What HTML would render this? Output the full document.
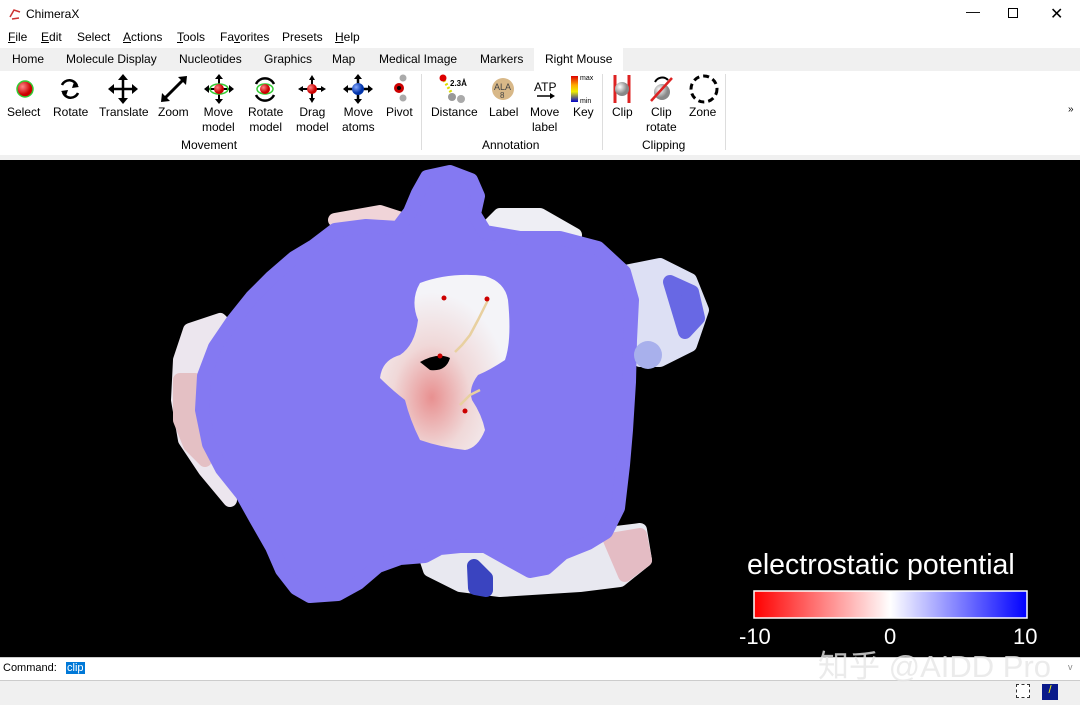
<!DOCTYPE html>
<html><head><meta charset="utf-8"><style>
*{margin:0;padding:0;box-sizing:border-box}
body{width:1080px;height:705px;overflow:hidden;background:#fff;font-family:"Segoe UI","Liberation Sans","DejaVu Sans",sans-serif;font-size:12px;color:#000;position:relative}
.abs{position:absolute}
.menu span{position:absolute;top:30px;font-size:12px}
.tabs{top:48px;left:0;width:1080px;height:23px;background:#f0f0f0}
.tabs span{position:absolute;top:4px;font-size:12px}
.tb{position:absolute;text-align:center;font-size:12px;line-height:15px;top:105px}
.grp{position:absolute;top:138px;font-size:12px}
</style></head><body>
<svg class="abs" style="left:8px;top:7px" width="14" height="14"><path d="M2 10 L6 3 L12 5 M4 12 L11 11" stroke="#c33" stroke-width="1.5" fill="none"/></svg>
<div class="abs" style="left:26px;top:7px;font-size:12px">ChimeraX</div>
<div class="abs" style="left:966px;top:3px;font-size:14px">&#8212;</div>
<div class="abs" style="left:1008px;top:8px;width:10px;height:10px;border:1px solid #000"></div>
<div class="abs" style="left:1050px;top:4px;font-size:16px">&#x2715;</div>
<div class="menu">
<span style="left:8px"><u>F</u>ile</span><span style="left:41px"><u>E</u>dit</span><span style="left:77px">Select</span><span style="left:123px"><u>A</u>ctions</span><span style="left:177px"><u>T</u>ools</span><span style="left:220px">Fa<u>v</u>orites</span><span style="left:282px">Presets</span><span style="left:335px"><u>H</u>elp</span>
</div>
<div class="abs tabs">
<span style="left:12px">Home</span><span style="left:66px">Molecule Display</span><span style="left:179px">Nucleotides</span><span style="left:264px">Graphics</span><span style="left:332px">Map</span><span style="left:379px">Medical Image</span><span style="left:480px">Markers</span>
<div class="abs" style="left:534px;top:0;width:89px;height:23px;background:#fff"></div>
<span style="left:545px">Right Mouse</span>
</div>
<div class="abs" style="left:0;top:71px;width:1080px;height:84px;background:#fff"></div>
<div class="abs" style="left:0;top:155px;width:1080px;height:5px;background:#f0f0f0"></div>
<div class="abs" style="left:421px;top:74px;width:1px;height:76px;background:#ddd"></div>
<div class="abs" style="left:602px;top:74px;width:1px;height:76px;background:#ddd"></div>
<div class="abs" style="left:725px;top:74px;width:1px;height:76px;background:#ddd"></div>
<div class="abs" style="left:1068px;top:104px;font-size:10px">»</div>
<svg class="abs" style="left:0;top:72px" width="730" height="34">
<defs><radialGradient id="rb" cx=".35" cy=".35"><stop offset="0" stop-color="#f88"/><stop offset="1" stop-color="#c00"/></radialGradient>
<radialGradient id="bb" cx=".35" cy=".35"><stop offset="0" stop-color="#8af"/><stop offset="1" stop-color="#03a"/></radialGradient>
<radialGradient id="gb" cx=".35" cy=".35"><stop offset="0" stop-color="#fff"/><stop offset="1" stop-color="#888"/></radialGradient>
<linearGradient id="key" x1="0" y1="0" x2="0" y2="1"><stop offset="0" stop-color="#d00"/><stop offset=".35" stop-color="#fa0"/><stop offset=".6" stop-color="#ee0"/><stop offset="1" stop-color="#00c"/></linearGradient></defs>
<circle cx="25" cy="17" r="8" fill="url(#rb)" stroke="#3c3" stroke-width="1.5"/>
<path d="M62 13 A8 8 0 0 1 77 14 M78 21 A8 8 0 0 1 63 20" stroke="#000" stroke-width="2.5" fill="none"/><path d="M74 10 L79 15 L72 16Z M66 24 L61 19 L68 18Z" fill="#000"/>
<path d="M123 4 V30 M110 17 H136" stroke="#000" stroke-width="2.5"/><path d="M123 2 L118 8 H128Z M123 32 L118 26 H128Z M108 17 L114 12 V22Z M138 17 L132 12 V22Z" fill="#000"/>
<path d="M163 28 L185 6" stroke="#000" stroke-width="3"/><path d="M161 30 L162 21 L170 29Z M187 4 L178 5 L186 13Z" fill="#000"/>
<g transform="translate(219,17)"><path d="M0 -13 V13 M-13 0 H13" stroke="#000" stroke-width="2"/><path d="M0 -15 L-4 -10 H4Z M0 15 L-4 10 H4Z M-15 0 L-10 -4 V4Z M15 0 L10 -4 V4Z" fill="#000"/><ellipse rx="9" ry="5" fill="none" stroke="#3c3" stroke-width="1.5"/><circle r="5" fill="url(#rb)"/></g>
<g transform="translate(265,17)"><path d="M-9 -5 A10 10 0 0 1 9 -5 M9 6 A10 10 0 0 1 -9 6" stroke="#000" stroke-width="2.5" fill="none"/><ellipse rx="8" ry="5" fill="none" stroke="#3c3" stroke-width="1.5"/><circle r="5" fill="url(#rb)"/></g>
<g transform="translate(312,17)"><path d="M0 -12 V12 M-12 0 H12" stroke="#000" stroke-width="2"/><path d="M0 -14 L-3 -9 H3Z M0 14 L-3 9 H3Z M-14 0 L-9 -3 V3Z M14 0 L9 -3 V3Z" fill="#000"/><circle r="5" fill="url(#rb)"/></g>
<g transform="translate(358,17)"><path d="M0 -13 V13 M-13 0 H13" stroke="#000" stroke-width="2.5"/><path d="M0 -15 L-4 -10 H4Z M0 15 L-4 10 H4Z M-15 0 L-10 -4 V4Z M15 0 L10 -4 V4Z" fill="#000"/><circle r="6" fill="url(#bb)"/></g>
<circle cx="403" cy="6" r="3.5" fill="#aaa"/><circle cx="403" cy="26" r="3.5" fill="#aaa"/><circle cx="399" cy="16" r="5" fill="#c00"/><circle cx="399" cy="16" r="2" fill="#000"/>
<path d="M444 8 L452 22" stroke="#dd0" stroke-width="3" stroke-dasharray="2 2"/><circle cx="443" cy="6" r="3.5" fill="#d00"/><circle cx="452" cy="25" r="4" fill="#999"/><circle cx="461" cy="27" r="4" fill="#aaa"/><text x="450" y="14" font-size="8" font-weight="bold" font-family="Liberation Sans">2.3Å</text>
<circle cx="503" cy="17" r="11" fill="#d8b888"/><text x="494" y="18" font-size="9" fill="#444" font-family="Liberation Sans">ALA</text><text x="500" y="26" font-size="8" fill="#444">8</text>
<text x="534" y="19" font-size="12" font-family="Liberation Sans">ATP</text><path d="M537 24 H553" stroke="#000" stroke-width="1.5"/><path d="M555 24 L550 21 V27Z" fill="#000"/>
<rect x="571" y="4" width="7" height="26" fill="url(#key)"/><text x="580" y="8" font-size="7" font-family="Liberation Sans">max</text><text x="580" y="31" font-size="7" font-family="Liberation Sans">min</text>
<path d="M615 3 V31 M629 3 V31" stroke="#d22" stroke-width="3"/><circle cx="622" cy="17" r="7" fill="url(#gb)"/>
<circle cx="662" cy="20" r="8" fill="url(#gb)"/><path d="M651 29 L672 6" stroke="#d22" stroke-width="2.5"/><path d="M655 10 A8 8 0 0 1 668 8" stroke="#000" stroke-width="2" fill="none"/>
<circle cx="704" cy="17" r="13" fill="none" stroke="#000" stroke-width="3" stroke-dasharray="6 4"/>
</svg>
<div class="tb" style="left:7px">Select</div><div class="tb" style="left:53px">Rotate</div><div class="tb" style="left:99px">Translate</div><div class="tb" style="left:158px">Zoom</div>
<div class="tb" style="left:202px">Move<br>model</div><div class="tb" style="left:248px">Rotate<br>model</div><div class="tb" style="left:296px">Drag<br>model</div><div class="tb" style="left:342px">Move<br>atoms</div><div class="tb" style="left:386px">Pivot</div>
<div class="tb" style="left:431px">Distance</div><div class="tb" style="left:489px">Label</div><div class="tb" style="left:530px">Move<br>label</div><div class="tb" style="left:573px">Key</div>
<div class="tb" style="left:612px">Clip</div><div class="tb" style="left:646px">Clip<br>rotate</div><div class="tb" style="left:689px">Zone</div>
<div class="grp" style="left:181px">Movement</div><div class="grp" style="left:482px">Annotation</div><div class="grp" style="left:642px">Clipping</div>
<svg class="abs" style="left:0;top:160px" width="1080" height="497" viewBox="0 160 1080 497">
<defs>
<linearGradient id="cb" x1="0" x2="1"><stop offset="0" stop-color="#f00"/><stop offset="0.5" stop-color="#fff"/><stop offset="1" stop-color="#00f"/></linearGradient>
<radialGradient id="pk" cx=".4" cy=".7" r=".6"><stop offset="0" stop-color="#e89090"/><stop offset=".5" stop-color="#f0d8d8"/><stop offset="1" stop-color="#f4f4f8"/></radialGradient>
</defs>
<rect x="0" y="160" width="1080" height="497" fill="#000"/>
<g stroke-linejoin="round" stroke-width="14">
<path d="M190 330 L220 320 L235 335 L225 420 L230 500 L205 470 L185 440 L178 400 L180 360Z" fill="#ece6ee" stroke="#ece6ee"/>
<path d="M180 380 L195 380 L205 460 L190 445 L180 420Z" fill="#e4c0c4" stroke="#e4c0c4"/>
<path d="M335 220 L380 212 L420 225 L360 232Z" fill="#f0d4d8" stroke="#f0d4d8"/>
<path d="M485 230 L500 215 L540 215 L575 235 L520 245Z" fill="#eeeef4" stroke="#eeeef4"/>
<path d="M625 272 L660 265 L690 280 L702 310 L690 345 L660 360 L640 360Z" fill="#dde0f4" stroke="#dde0f4"/>
<path d="M670 282 L692 292 L698 318 L685 332Z" fill="#6868e4" stroke="#6868e4"/>
<path d="M420 540 L470 535 L520 555 L560 560 L600 535 L640 530 L645 560 L620 580 L580 585 L500 590 L460 585 L430 570Z" fill="#e8e8f0" stroke="#e8e8f0"/>
<path d="M474 566 L486 578 L486 590 L475 588Z" fill="#3a44c0" stroke="#3a44c0"/>
<path d="M610 540 L640 535 L645 560 L625 575Z" fill="#e4bcc4" stroke="#e4bcc4"/>
<path d="M427 177 L450 172 L471 180 L478 196 L474 214 L485 232 L520 238 L560 238 L598 248 L624 272 L632 300 L630 340 L629 382 L626 430 L623 465 L618 508 L606 532 L588 543 L563 553 L546 568 L530 571 L510 560 L485 546 L460 546 L440 548 L425 556 L400 558 L378 566 L358 583 L338 594 L310 596 L296 588 L282 570 L272 547 L256 519 L242 494 L222 469 L209 444 L202 410 L204 376 L215 347 L232 322 L252 297 L272 277 L294 258 L314 246 L335 230 L366 226 L398 228 L410 212 L418 193Z" fill="#8479f2" stroke="#8479f2"/>
</g>
<circle cx="648" cy="355" r="14" fill="#a8b0ec"/>
<path d="M420 283 Q450 272 485 276 Q505 282 508 300 Q512 340 505 360 Q490 370 478 375 Q468 388 472 400 Q482 415 485 430 Q478 448 465 450 Q440 447 420 440 Q410 420 405 400 Q392 390 380 378 Q382 360 400 355 Q415 345 418 320 Q410 300 420 283Z" fill="url(#pk)"/>
<path d="M420 362 Q438 352 450 358 Q446 372 430 370Z" fill="#000"/>
<path d="M488 300 L478 320 L470 335 L462 345 L455 352 M460 405 L470 395 L480 390" stroke="#e8d0a0" stroke-width="2.5" fill="none"/>
<circle cx="444" cy="298" r="2.5" fill="#c00"/><circle cx="487" cy="299" r="2.5" fill="#c00"/><circle cx="440" cy="356" r="2.5" fill="#c00"/><circle cx="465" cy="411" r="2.5" fill="#c00"/>
<text x="747" y="574" font-size="28.5" fill="#fff" font-family="Liberation Sans">electrostatic potential</text>
<rect x="754" y="591" width="273" height="27" fill="url(#cb)" stroke="#fff" stroke-width="1.5"/>
<text x="739" y="644" font-size="22" fill="#fff" font-family="Liberation Sans">-10</text>
<text x="884" y="644" font-size="22" fill="#fff" font-family="Liberation Sans">0</text>
<text x="1013" y="644" font-size="22" fill="#fff" font-family="Liberation Sans">10</text>
</svg>
<div class="abs" style="left:0;top:657px;width:1080px;height:24px;background:#fff;border-top:1px solid #ccc;border-bottom:1px solid #ccc"></div>
<div class="abs" style="left:3px;top:662px;font-size:11px">Command:</div>
<div class="abs" style="left:66px;top:662px;font-size:11px;background:#0078d7;color:#fff;padding:0 1px">clip</div>
<div class="abs" style="left:1068px;top:662px;font-size:9px;color:#888">v</div>
<div class="abs" style="left:0;top:681px;width:1080px;height:24px;background:#f0f0f0"></div>
<div class="abs" style="left:1016px;top:684px;width:14px;height:14px;border:1px dashed #333;background:#fff"></div>
<div class="abs" style="left:1042px;top:684px;width:16px;height:16px;background:#0a1a8a;color:#ff0;font-size:11px;text-align:center">/</div>
<div class="abs" style="left:818px;top:641px;font-size:31px;color:rgba(230,230,230,.8);font-family:'Liberation Sans','Noto Sans CJK SC',sans-serif">知乎 @AIDD Pro</div>
</body></html>
